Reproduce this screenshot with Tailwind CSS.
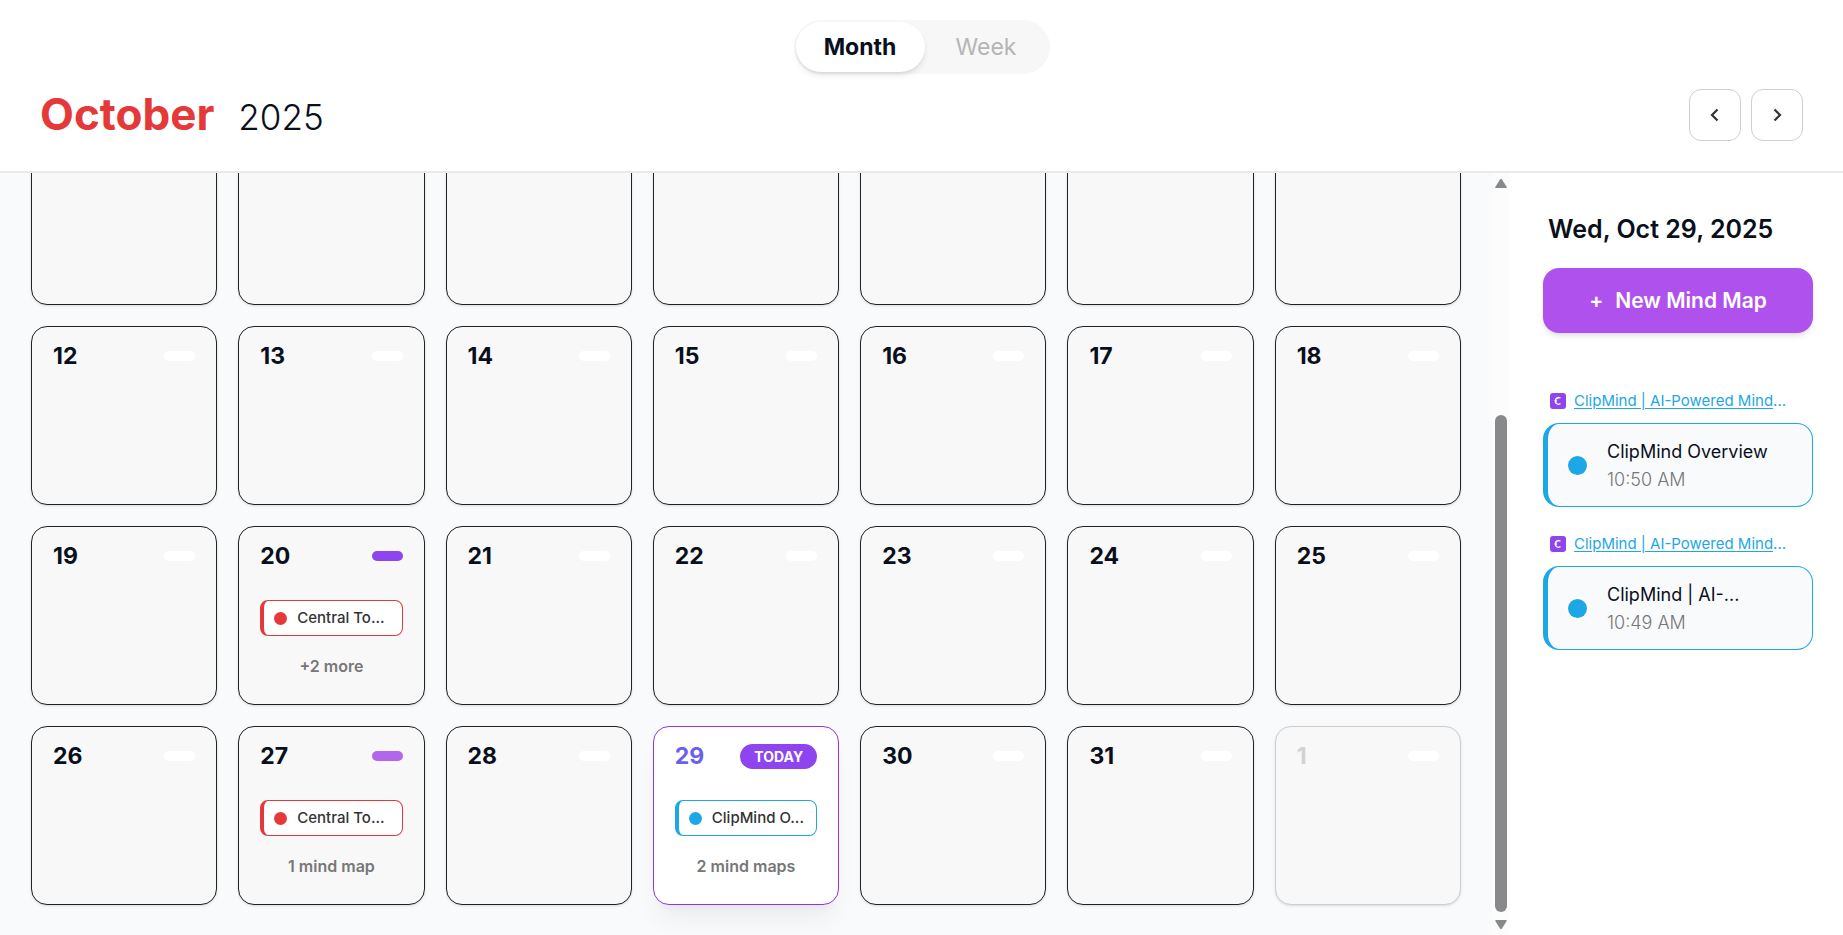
<!DOCTYPE html>
<html lang="en">
<head>
  <meta charset="UTF-8">
  <meta name="viewport" content="width=device-width, initial-scale=1.0">
  <title>ClipMind Calendar</title>
  <script src="https://cdn.jsdelivr.net/npm/@tailwindcss/browser@4"></script>
</head>
<body class="h-screen flex flex-col overflow-hidden bg-white text-[#0a0f1c] font-['Inter','Liberation_Sans',sans-serif]">

  <!-- Header: view switch, month title, prev / next -->
  <header class="shrink-0 border-b-2 border-[#e8eaec] pt-5 pb-[30px]">
    <div class="mx-auto flex w-64 rounded-full bg-[#f7f7f7] p-0.5">
      <button class="h-[50px] w-[129px] rounded-full bg-white text-[23px] font-bold shadow-md">Month</button>
      <button class="h-[50px] flex-1 rounded-full text-[23px] text-[#b5b5b5]">Week</button>
    </div>
    <div class="mt-[15px] flex h-[52px] items-center justify-between px-10">
      <h1 class="flex items-baseline gap-6">
        <span class="text-[44px] leading-[52px] font-bold text-[#e53939]">October</span>
        <span class="text-[35px] leading-[52px] font-light">2025</span>
      </h1>
      <div class="flex gap-2.5">
        <button aria-label="Previous month" class="flex size-[52px] items-center justify-center rounded-xl border border-[#cfcfcf]">
          <svg class="size-5" viewBox="0 0 20 20" fill="none" stroke="#333" stroke-width="2.200"><path d="M12.500 4.500 7 10l5.500 5.500"/></svg>
        </button>
        <button aria-label="Next month" class="flex size-[52px] items-center justify-center rounded-xl border border-[#cfcfcf]">
          <svg class="size-5" viewBox="0 0 20 20" fill="none" stroke="#333" stroke-width="2.200"><path d="M7.500 4.500 13 10l-5.500 5.500"/></svg>
        </button>
      </div>
    </div>
  </header>

  <div class="flex min-h-0 flex-1">
    <!-- Month grid, scrolled to the end -->
    <main class="flex min-w-0 flex-1 flex-col justify-end overflow-hidden bg-[#f9fafc] px-[31px] pb-[30px]">
      <div id="days" class="grid grid-cols-7 gap-[21px]"></div>
    </main>

    <!-- Scrollbar -->
    <div class="flex w-[18px] shrink-0 flex-col items-center bg-[#fcfcfc] pt-1 pb-1">
      <svg class="h-3 w-3" viewBox="0 0 12 12" fill="#88898a"><path d="M1 11Q-.3 11 .6 9.500L5 2.500Q6 1.200 7 2.500L11.400 9.500Q12.300 11 11 11Z"/></svg>
      <div class="mt-[226px] w-3 flex-1 rounded-full bg-[#88898a]"></div>
      <svg class="mt-[7px] h-3 w-3" viewBox="0 0 12 12" fill="#88898a"><path d="M1 1Q-.3 1 .6 2.500L5 9.500Q6 10.800 7 9.500L11.400 2.500Q12.300 1 11 1Z"/></svg>
    </div>

    <!-- Selected day -->
    <aside class="w-[333px] shrink-0 bg-white pt-9 pl-[33px] pr-[30px]">
      <h2 class="pl-[5px] text-[25px] leading-10 font-semibold whitespace-nowrap">Wed, Oct 29, 2025</h2>
      <button class="mt-[19px] flex h-[65px] w-full items-center justify-center gap-3 rounded-2xl bg-[#af52ed] text-[21px] font-semibold text-white shadow-md"><span>+</span><span>New Mind Map</span></button>
      <div id="maps" class="mt-14 space-y-[25px]"></div>
    </aside>
  </div>

  <script>
    const events = {
      20: { title: 'Central To...', note: '+2 more', tone: 'border-[#e53939]', dot: 'bg-[#e53939]', pill: 'bg-[#8e44ef]' },
      27: { title: 'Central To...', note: '1 mind map', tone: 'border-[#e53939]', dot: 'bg-[#e53939]', pill: 'bg-[#b067ee]' },
      29: { title: 'ClipMind O...', note: '2 mind maps', tone: 'border-[#1ea7e6]', dot: 'bg-[#1ea7e6]' },
    };

    function dayCell(day, next) {
      const ev = next ? null : events[day];
      const today = day === 29;
      const box = today ? 'border-[#8e34ef] bg-white shadow-xl shadow-black/5'
        : next ? 'border-[#cfcfcf] bg-[#f8f8f8] shadow-sm' : 'border-[#222] bg-[#f8f8f8] shadow-sm';
      const num = today ? 'text-[#6a60ee]' : next ? 'text-[#d2d2d2]' : '';
      const badge = today
        ? '<span class="rounded-full bg-[#8e44ef] px-[14px] text-[14px] leading-[25px] font-bold text-white">TODAY</span>'
        : `<span class="h-2.5 w-[31px] rounded-full ${ev ? ev.pill : 'bg-white'}"></span>`;
      const body = ev ? `
        <button class="mt-[31px] flex h-9 w-full items-center gap-2.5 rounded-lg border border-l-4 bg-white pl-2.5 text-[15px] font-medium text-[#333] whitespace-nowrap ${ev.tone}">
          <span class="size-[13px] shrink-0 rounded-full ${ev.dot}"></span>${ev.title}
        </button>
        <p class="mt-5 text-center text-[16px] leading-5 font-semibold text-[#777]">${ev.note}</p>` : '';
      return `<section class="h-[179px] rounded-2xl border px-[21px] pt-4 ${box}">
        <div class="flex h-[26px] items-center justify-between">
          <span class="text-[23px] font-bold ${num}">${day}</span>${badge}
        </div>${body}
      </section>`;
    }

    // The first visible week is scrolled past its day numbers
    let html = '<section class="h-[179px] rounded-2xl border border-[#222] bg-[#f8f8f8] shadow-sm"></section>'.repeat(7);
    for (let day = 12; day <= 31; day++) html += dayCell(day);
    document.getElementById('days').innerHTML = html + dayCell(1, true);

    const maps = [['ClipMind Overview', '10:50 AM'], ['ClipMind | AI-...', '10:49 AM']];
    document.getElementById('maps').innerHTML = maps.map(([title, time]) => `
      <article>
        <div class="flex h-6 items-center gap-2 pl-[7px]">
          <svg class="size-4 shrink-0" viewBox="0 0 16 16" fill="none"><rect width="16" height="16" rx="3" fill="#8e44ef"/><path d="M10.500 5.200 8.500 4.500Q5.500 5 5.300 8q.2 3 3.200 3.300l2-.6M4.500 8H7M8.500 4v1.500" stroke="#fff" stroke-width="1.300"/></svg>
          <a href="#" class="text-[15px] text-[#1ea7e6] whitespace-nowrap"><span class="underline underline-offset-2">ClipMind | AI-Powered Mind</span>...</a>
        </div>
        <div class="mt-[10px] flex h-[84px] items-center gap-5 rounded-2xl border border-l-[5px] border-[#1ea7e6] bg-[#f9fafc] pl-5">
          <span class="size-[19px] shrink-0 rounded-full bg-[#1ea7e6] ring-2 ring-white"></span>
          <div class="pt-0.5 whitespace-nowrap">
            <h3 class="text-[18px] leading-7">${title}</h3>
            <p class="text-[18px] leading-7 font-light text-[#777]">${time}</p>
          </div>
        </div>
      </article>`).join('');
  </script>
</body>
</html>
